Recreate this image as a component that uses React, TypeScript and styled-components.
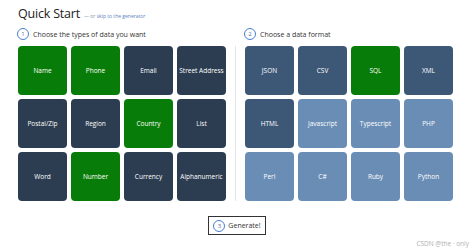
import React from "react";
import styled, { createGlobalStyle } from "styled-components";

const Global = createGlobalStyle`
  html, body { margin: 0; padding: 0; background: #ffffff; }
  body { font-family: "Open Sans", "Noto Sans", sans-serif; color: #333; }
`;

type Tone = "green" | "navy" | "slate" | "steel";

const toneColor: Record<Tone, string> = {
  green: "#087c08",
  navy: "#2c3d51",
  slate: "#3d5877",
  steel: "#6a8db5",
};

const Page = styled.div`
  width: 474px;
  height: 250px;
  box-sizing: border-box;
  padding: 5px 0 0 18px;
  position: relative;
`;

const TitleRow = styled.div`
  display: flex;
  align-items: baseline;
  gap: 4px;
  height: 21px;
`;

const Title = styled.h1`
  margin: 0;
  font-size: 12.5px;
  font-weight: 400;
  color: #222;
  letter-spacing: -0.2px;
`;

const SubTitle = styled.span`
  font-size: 5px;
  color: #8a94a6;
  a { color: #5a7fbf; text-decoration: none; }
`;

const Columns = styled.div`
  display: grid;
  grid-template-columns: 208px 1px 208px;
  column-gap: 9px;
  row-gap: 6px;
  margin-top: 2px;
`;

const StepHeading = styled.div`
  display: flex;
  align-items: center;
  gap: 4px;
  font-size: 7px;
  color: #333;
  height: 12px;
  margin-left: -1px;
`;

const StepNum = styled.span`
  width: 10px;
  height: 10px;
  border: 1px solid #4a7fd0;
  border-radius: 50%;
  display: inline-flex;
  align-items: center;
  justify-content: center;
  font-size: 6px;
  color: #4a6fb0;
  box-sizing: content-box;
`;

const Divider = styled.div`
  background: #e4e6ea;
  width: 1px;
`;

const TileGrid = styled.div`
  display: grid;
  grid-template-columns: repeat(4, 49px);
  grid-auto-rows: 49px;
  gap: 4px;
`;

const Tile = styled.div<{ $tone: Tone }>`
  background: ${(p) => toneColor[p.$tone]};
  border-radius: 4px;
  color: #fff;
  display: flex;
  align-items: center;
  justify-content: center;
  font-size: 6.5px;
  white-space: nowrap;
`;

const Footer = styled.div`
  display: flex;
  justify-content: center;
  margin-top: 15px;
  margin-left: -18px;
`;

const GenerateButton = styled.button`
  display: inline-flex;
  align-items: center;
  gap: 3px;
  border: 1px solid #333;
  background: #fff;
  padding: 2px 4px;
  height: 19px;
  box-sizing: border-box;
  font-family: inherit;
  font-size: 7px;
  color: #333;
`;

const Watermark = styled.div`
  position: absolute;
  right: 5px;
  bottom: 2px;
  font-size: 6.5px;
  color: #b0b0b0;
`;

const dataTypes: [string, Tone][] = [
  ["Name", "green"],
  ["Phone", "green"],
  ["Email", "navy"],
  ["Street Address", "navy"],
  ["Postal/Zip", "navy"],
  ["Region", "navy"],
  ["Country", "green"],
  ["List", "navy"],
  ["Word", "navy"],
  ["Number", "green"],
  ["Currency", "navy"],
  ["Alphanumeric", "navy"],
];

const formats: [string, Tone][] = [
  ["JSON", "slate"],
  ["CSV", "slate"],
  ["SQL", "green"],
  ["XML", "slate"],
  ["HTML", "slate"],
  ["Javascript", "steel"],
  ["Typescript", "steel"],
  ["PHP", "steel"],
  ["Perl", "steel"],
  ["C#", "steel"],
  ["Ruby", "steel"],
  ["Python", "steel"],
];

export default function App() {
  return (
    <>
      <Global />
      <Page>
        <TitleRow>
          <Title>Quick Start</Title>
          <SubTitle>
            — or <a href="#">skip to the generator</a>
          </SubTitle>
        </TitleRow>
        <Columns>
          <StepHeading>
            <StepNum>1</StepNum>
            Choose the types of data you want
          </StepHeading>
          <div />
          <StepHeading>
            <StepNum>2</StepNum>
            Choose a data format
          </StepHeading>
          <TileGrid>
            {dataTypes.map(([label, tone]) => (
              <Tile key={label} $tone={tone}>
                {label}
              </Tile>
            ))}
          </TileGrid>
          <Divider />
          <TileGrid>
            {formats.map(([label, tone]) => (
              <Tile key={label} $tone={tone}>
                {label}
              </Tile>
            ))}
          </TileGrid>
        </Columns>
        <Footer>
          <GenerateButton>
            <StepNum>3</StepNum>
            Generate!
          </GenerateButton>
        </Footer>
        <Watermark>CSDN @the · only</Watermark>
      </Page>
    </>
  );
}
